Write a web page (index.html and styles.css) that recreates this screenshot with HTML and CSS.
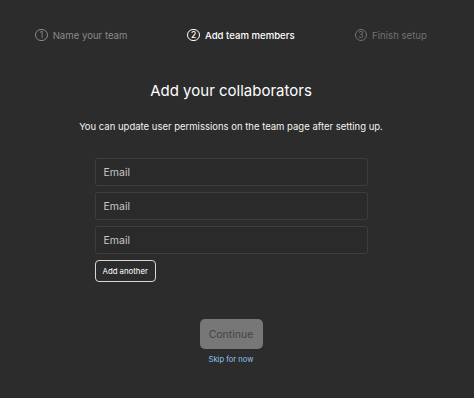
FILE: index.html
```html
<!DOCTYPE html>
<html>
<head>
<meta charset="utf-8">
<link rel="stylesheet" href="styles.css">
</head>
<body>
<div class="page">
  <nav class="steps">
    <div class="step done"><span class="num">1</span><span>Name your team</span></div>
    <div class="step active"><span class="num">2</span><span>Add team members</span></div>
    <div class="step todo"><span class="num">3</span><span>Finish setup</span></div>
  </nav>
  <h1 class="title">Add your collaborators</h1>
  <p class="sub">You can update user permissions on the team page after setting up.</p>
  <div class="form">
    <div class="input">Email</div>
    <div class="input">Email</div>
    <div class="input">Email</div>
    <div class="add-row"><button class="add">Add another</button></div>
  </div>
  <div class="actions">
    <button class="continue">Continue</button>
    <a class="skip">Skip for now</a>
  </div>
</div>
</body>
</html>
```
FILE: styles.css
```css
html, body {
  margin: 0;
  padding: 0;
  background: #2c2c2c;
}
body {
  font-family: Inter, "Noto Sans", sans-serif;
  color: #fff;
  width: 474px;
  height: 398px;
  overflow: hidden;
}
.page {
  display: flex;
  flex-direction: column;
  align-items: center;
  padding-right: 12px;
}
.steps {
  display: flex;
  gap: 60px;
  margin-top: 28px;
  height: 14px;
  align-items: center;
}
.step {
  display: flex;
  align-items: center;
  gap: 5px;
  font-size: 9.6px;
}
.step .num {
  width: 10.5px;
  height: 10.5px;
  border: 1.3px solid currentColor;
  border-radius: 50%;
  font-size: 8.5px;
  display: flex;
  align-items: center;
  justify-content: center;
  line-height: 1;
}
.step.done { color: #8a8a8a; }
.step.active { color: #ffffff; font-weight: 500; }
.step.active .num { border-width: 1.5px; }
.step.todo { color: #727272; }
.title {
  font-size: 15px;
  font-weight: 400;
  margin: 39px 0 0;
  line-height: 20px;
}
.sub {
  font-size: 9.5px;
  margin: 19px 0 0;
  line-height: 14px;
  color: #f2f2f2;
}
.form {
  width: 273px;
  margin-top: 24px;
  display: flex;
  flex-direction: column;
  gap: 6px;
}
.input {
  height: 26px;
  border: 1px solid #3d3d3d;
  background: #2a2a2a;
  border-radius: 2px;
  box-sizing: content-box;
  color: #c8c8c8;
  font-size: 10.5px;
  display: flex;
  align-items: center;
  padding-left: 8px;
}
.add-row { display: flex; }
.add {
  font-family: inherit;
  background: transparent;
  color: #fff;
  border: 1px solid #d8d8d8;
  border-radius: 4px;
  font-size: 7.8px;
  height: 22px;
  padding: 0 7px;
  cursor: pointer;
}
.actions {
  display: flex;
  flex-direction: column;
  align-items: center;
  margin-top: 37px;
}
.continue {
  font-family: inherit;
  width: 63px;
  height: 30px;
  border: none;
  border-radius: 5px;
  background: #777777;
  color: #444444;
  font-size: 10.5px;
}
.skip {
  margin-top: 6px;
  font-size: 7.6px;
  color: #8ec3ee;
}
```
